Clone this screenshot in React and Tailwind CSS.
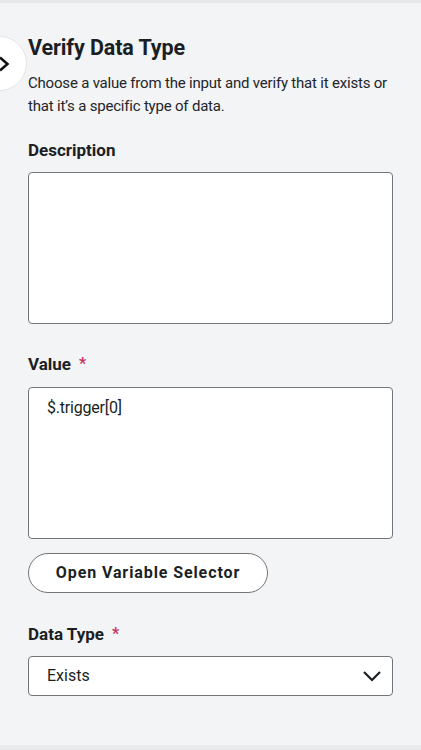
import React from 'react';

const font = { fontFamily: 'Roboto, "Noto Sans", sans-serif' };

const Label = ({ children, required }) => (
  <div className="flex items-center gap-[8px] text-[17px] font-bold text-[#1b1f24] leading-6">
    {children}
    {required && <span className="text-[#c8325e] text-[16px] font-bold">*</span>}
  </div>
);

export default function App() {
  return (
    <div
      className="relative w-[421px] h-[750px] overflow-hidden bg-[#f3f4f6] border-t-[3px] border-[#e5e7eb] border-b-[5px] border-b-[#e8e9eb]"
      style={font}
    >
      {/* collapse button */}
      <div className="absolute left-[-28px] top-[33px] w-[55px] h-[55px] rounded-full bg-white border border-[#e3e4e6] flex items-center justify-end pr-[16px]">
        <svg width="12" height="16" viewBox="0 0 12 16" fill="none">
          <path d="M2 1.5l7.5 6.5-7.5 6.5" stroke="#111" strokeWidth="2.5" strokeLinejoin="miter" />
        </svg>
      </div>

      <div className="px-[28px] pt-[31px] text-[#1b1f24]">
        <h1 className="text-[21.5px] font-bold leading-7 tracking-[-0.1px]">Verify Data Type</h1>
        <p className="mt-[10px] text-[15px] leading-[23px] text-[#22262b] tracking-[-0.2px]">
          Choose a value from the input and verify that it exists or that it’s a specific type of data.
        </p>

        <div className="mt-[20px]">
          <Label>Description</Label>
          <div className="mt-[10px] h-[152px] rounded-[4px] border border-[#737578] bg-white" />
        </div>

        <div className="mt-[28px]">
          <Label required>Value</Label>
          <div className="mt-[11px] h-[152px] rounded-[4px] border border-[#737578] bg-white px-[18px] pt-[8px] text-[16px] leading-6 tracking-[-0.2px]">
            $.trigger[0]
          </div>
          <button className="mt-[14px] h-[40px] w-[240px] rounded-full border border-[#737578] bg-white text-[16px] font-bold tracking-[0.9px] text-[#1b1f24]">
            Open Variable Selector
          </button>
        </div>

        <div className="mt-[29px]">
          <Label required>Data Type</Label>
          <div className="mt-[10px] h-[40px] rounded-[4px] border border-[#737578] bg-white pl-[18px] pr-[10px] flex items-center justify-between text-[16px]">
            <span>Exists</span>
            <svg width="20" height="12" viewBox="0 0 20 12" fill="none">
              <path d="M2 2l8 8 8-8" stroke="#1b1f24" strokeWidth="2.2" />
            </svg>
          </div>
        </div>
      </div>
    </div>
  );
}
